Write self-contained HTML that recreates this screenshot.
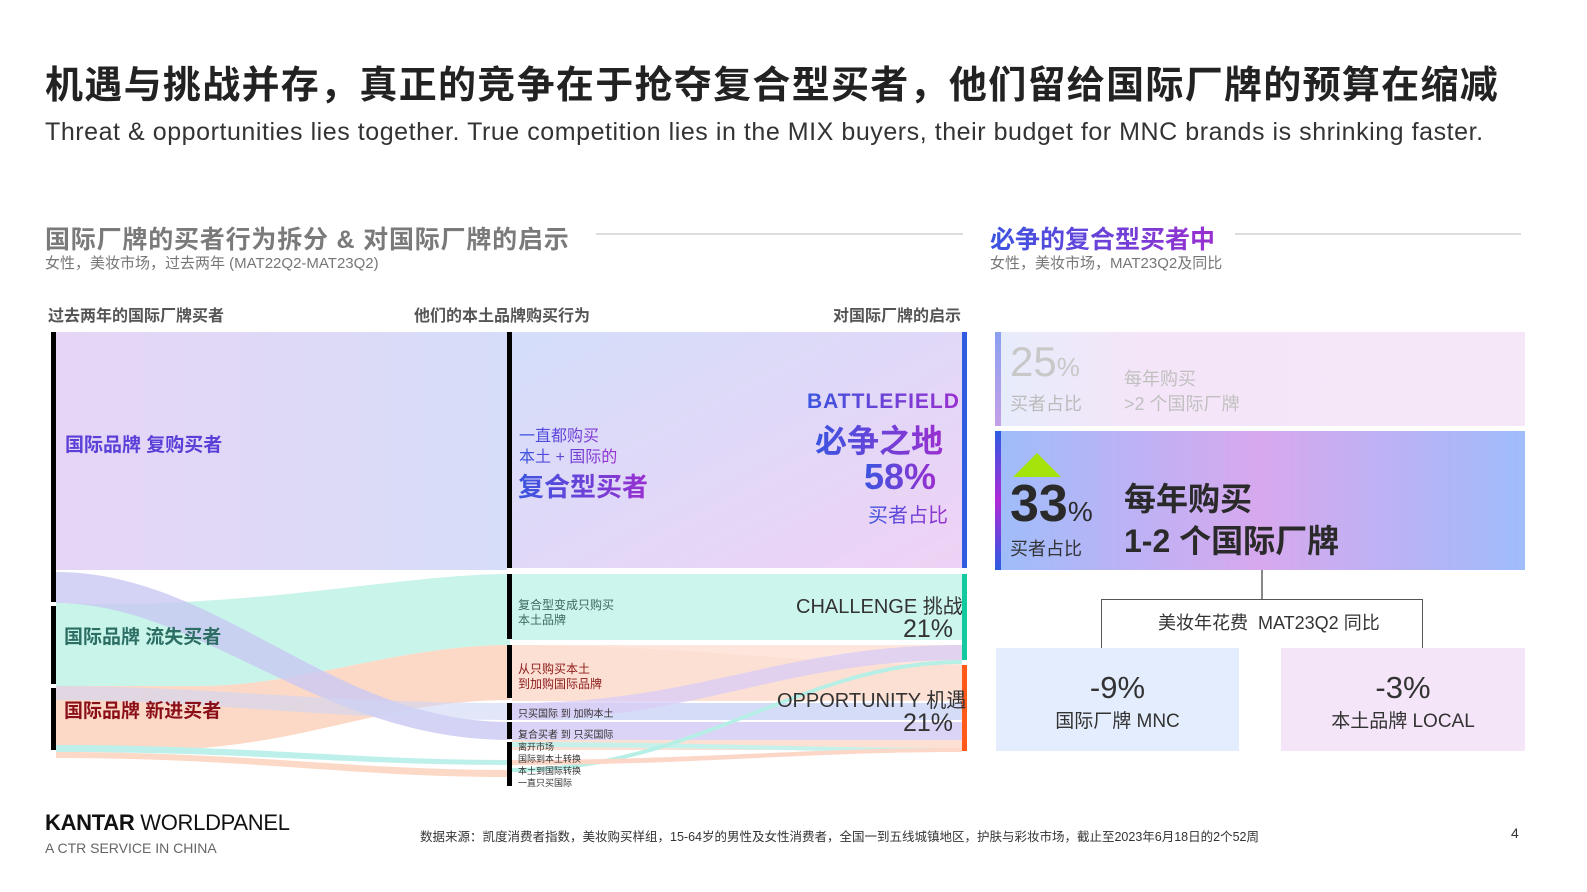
<!DOCTYPE html>
<html style="width:1587px;height:892px;overflow:hidden"><head><meta charset="utf-8"><style>
*{margin:0;padding:0;box-sizing:border-box}
html,body{width:1587px;height:892px;overflow:hidden}
body{background:#fff;position:relative;font-family:"Liberation Sans","Noto Sans CJK SC",sans-serif;color:#333}
.a{position:absolute;white-space:nowrap}
.g{background:linear-gradient(90deg,#3a55e0,#9a2fd0);-webkit-background-clip:text;background-clip:text;color:transparent}
</style></head><body>
<div class="a" style="left:45px;top:54px;font-size:38px;font-weight:700;color:#222;letter-spacing:1.3px">机遇与挑战并存，真正的竞争在于抢夺复合型买者，他们留给国际厂牌的预算在缩减</div>
<div class="a" style="left:45px;top:118px;font-size:25px;color:#333;letter-spacing:0.55px">Threat &amp; opportunities lies together. True competition lies in the MIX buyers, their budget for MNC brands is shrinking faster.</div>

<div class="a" style="left:45px;top:220px;font-size:25px;font-weight:700;color:#7a7a7a;letter-spacing:0.8px">国际厂牌的买者行为拆分 &amp; 对国际厂牌的启示</div>
<div class="a" style="left:596px;top:233px;width:367px;height:2px;background:#ddd"></div>
<div class="a" style="left:45px;top:252px;font-size:15px;color:#777">女性，美妆市场，过去两年 (MAT22Q2-MAT23Q2)</div>
<div class="a g" style="left:990px;top:220px;font-size:25px;font-weight:700">必争的复合型买者中</div>
<div class="a" style="left:1235px;top:233px;width:286px;height:2px;background:#ddd"></div>
<div class="a" style="left:990px;top:252px;font-size:15px;color:#777">女性，美妆市场，MAT23Q2及同比</div>

<div class="a" style="left:48px;top:302px;font-size:16px;font-weight:700;color:#555">过去两年的国际厂牌买者</div>
<div class="a" style="left:414px;top:302px;font-size:16px;font-weight:700;color:#555">他们的本土品牌购买行为</div>
<div class="a" style="left:833px;top:302px;font-size:16px;font-weight:700;color:#555">对国际厂牌的启示</div>

<svg class="a" style="left:0;top:0" width="1000" height="800">
<defs>
<linearGradient id="lp" x1="0" x2="1"><stop offset="0" stop-color="#e6d5f5"/><stop offset="1" stop-color="#d6ddf8"/></linearGradient>
<linearGradient id="mp" x1="0" x2="1" y1="0" y2="1"><stop offset="0" stop-color="#d3defa"/><stop offset="1" stop-color="#efd2f5"/></linearGradient>
</defs>
<rect x="56" y="332" width="451" height="238" fill="url(#lp)"/>
<rect x="512" y="332" width="450" height="236" fill="url(#mp)"/>
<path d="M56 603 L56 686 L200 686 C300 686 400 645 510 645 L510 640 L510 574 C400 574 250 610 56 603Z" fill="#c8f4ea"/>
<path d="M56 686 L56 750 L150 750 C300 750 380 700 510 700 L510 645 C400 645 300 686 200 686Z" fill="#fcd9c6"/>
<path d="M56 572 L56 603 C200 603 320 740 510 740 L510 722 C330 722 220 572 56 572Z" fill="#c9c8f3" opacity="0.8"/>
<path d="M56 686 C200 686 330 703 510 703 L510 720 C330 720 200 700 56 700Z" fill="#cfd6f5" opacity="0.6"/>
<path d="M56 745 C250 745 350 760 510 760 L510 765 C350 765 250 752 56 752Z" fill="#bdf0ea"/>
<path d="M56 752 C250 752 350 770 510 770 L510 777 C350 777 250 758 56 758Z" fill="#fcd9c6"/>
<rect x="512" y="574" width="450" height="66" fill="#ccf5ee"/>
<rect x="512" y="645" width="450" height="56" fill="#ffe6dd"/>
<path d="M512 645 L512 701 C700 701 800 700 962 700 L962 665 C800 665 700 645 512 645Z" fill="#fde0d4"/>
<rect x="512" y="703" width="450" height="17" fill="#d5dcf8"/>
<rect x="512" y="722" width="450" height="18" fill="#dcd4f7"/>
<path d="M512 703 C700 703 780 645 962 645 L962 660 C780 660 700 720 512 720Z" fill="#d9cdf5" opacity="0.8"/>
<path d="M512 740 L962 740 L962 750 L512 750Z" fill="#fde0d4"/>
<path d="M512 742 C700 742 800 748 962 748 L962 752 C800 752 700 747 512 747Z" fill="#c5f1ea"/>
<path d="M512 768 C700 768 800 660 962 660 L962 664 C800 664 700 772 512 772Z" fill="#b5efe6"/>
<path d="M512 765 C700 765 800 752 962 752 L962 748 C800 748 700 760 512 760Z" fill="#fcd6c6"/>
<rect x="51" y="332" width="5" height="270" fill="#000"/>
<rect x="51" y="606" width="5" height="78" fill="#000"/>
<rect x="51" y="688" width="5" height="62" fill="#000"/>
<rect x="507" y="332" width="5" height="236" fill="#000"/>
<rect x="507" y="574" width="5" height="65" fill="#000"/>
<rect x="507" y="645" width="5" height="53" fill="#000"/>
<rect x="507" y="703" width="5" height="17" fill="#000"/>
<rect x="507" y="722" width="5" height="17" fill="#000"/>
<rect x="507" y="742" width="5" height="44" fill="#000"/>
<rect x="962" y="332" width="5" height="236" fill="#2f5ce0"/>
<rect x="962" y="574" width="5" height="86" fill="#12c9a0"/>
<rect x="962" y="665" width="5" height="86" fill="#ff5a1a"/>
</svg>

<div class="a" style="left:65px;top:430px;font-size:19px;font-weight:700;color:#5a3fd8">国际品牌 复购买者</div>
<div class="a" style="left:64px;top:622px;font-size:19px;font-weight:700;color:#2c6e63">国际品牌 流失买者</div>
<div class="a" style="left:64px;top:696px;font-size:19px;font-weight:700;color:#8b0f1a">国际品牌 新进买者</div>

<div class="a g" style="left:519px;top:426px;font-size:16px;line-height:21px">一直都购买<br>本土 + 国际的</div>
<div class="a g" style="left:518px;top:467px;font-size:26px;font-weight:700">复合型买者</div>
<div class="a g" style="left:807px;top:390px;font-size:21px;font-weight:700;letter-spacing:1px">BATTLEFIELD</div>
<div class="a g" style="left:815px;top:416px;font-size:32px;font-weight:700">必争之地</div>
<div class="a g" style="left:864px;top:456px;font-size:36px;font-weight:700">58%</div>
<div class="a g" style="left:868px;top:499px;font-size:20px">买者占比</div>

<div class="a" style="left:518px;top:598px;font-size:12px;line-height:15px;color:#3b6a63">复合型变成只购买<br>本土品牌</div>
<div class="a" style="left:796px;top:590px;font-size:20px;color:#333">CHALLENGE 挑战</div>
<div class="a" style="left:903px;top:615px;font-size:25px;color:#333">21%</div>
<div class="a" style="left:518px;top:662px;font-size:12px;line-height:15px;color:#8b1a1a">从只购买本土<br>到加购国际品牌</div>
<div class="a" style="left:777px;top:684px;font-size:20px;color:#333">OPPORTUNITY 机遇</div>
<div class="a" style="left:903px;top:709px;font-size:25px;color:#333">21%</div>
<div class="a" style="left:518px;top:705px;font-size:10px;color:#333">只买国际 到 加购本土</div>
<div class="a" style="left:518px;top:726px;font-size:10px;color:#333">复合买者 到 只买国际</div>
<div class="a" style="left:518px;top:741px;font-size:9px;line-height:12px;color:#333">离开市场<br>国际到本土转换<br>本土到国际转换<br>一直只买国际</div>

<div class="a" style="left:995px;top:332px;width:530px;height:94px;background:linear-gradient(90deg,#e6ecfb,#f5e5f8 30%,#f5e6f8)"></div>
<div class="a" style="left:995px;top:332px;width:6px;height:94px;background:linear-gradient(#8aa0f0,#c5a0e8)"></div>
<div class="a" style="left:1010px;top:338px;font-size:42px;color:#c8c8c8;font-weight:300">25<span style="font-size:26px">%</span></div>
<div class="a" style="left:1010px;top:390px;font-size:18px;color:#bbb">买者占比</div>
<div class="a" style="left:1124px;top:367px;font-size:18px;line-height:25px;color:#c0c0c0">每年购买<br>&gt;2 个国际厂牌</div>

<div class="a" style="left:995px;top:431px;width:530px;height:139px;background:linear-gradient(90deg,#9fbdfb,#d7a8ee 50%,#9fbcfb)"></div>
<div class="a" style="left:995px;top:431px;width:6px;height:139px;background:linear-gradient(#2b5ce0,#b02ad8 50%,#2b5ce0)"></div>
<div class="a" style="left:1013px;top:453px;width:0;height:0;border-left:24px solid transparent;border-right:24px solid transparent;border-bottom:24px solid #a4e40a"></div>
<div class="a" style="left:1010px;top:474px;font-size:52px;font-weight:700;color:#2a2a2a">33<span style="font-size:28px;font-weight:400">%</span></div>
<div class="a" style="left:1010px;top:535px;font-size:18px;color:#333">买者占比</div>
<div class="a" style="left:1124px;top:478px;font-size:32px;line-height:42px;font-weight:700;color:#2a2a2a">每年购买<br>1-2 个国际厂牌</div>

<div class="a" style="left:1261px;top:570px;width:2px;height:30px;background:#888"></div>
<div class="a" style="left:1101px;top:599px;width:322px;height:50px;border:1.5px solid #555;border-bottom:none"></div>
<div class="a" style="left:1158px;top:609px;font-size:18px;color:#333">美妆年花费&nbsp; MAT23Q2 同比</div>
<div class="a" style="left:996px;top:648px;width:243px;height:103px;background:#e3edfd;text-align:center">
<div style="font-size:31px;margin-top:22px;color:#333">-9%</div><div style="font-size:19px;color:#333">国际厂牌 MNC</div></div>
<div class="a" style="left:1281px;top:648px;width:244px;height:103px;background:#f5e5f8;text-align:center">
<div style="font-size:31px;margin-top:22px;color:#333">-3%</div><div style="font-size:19px;color:#333">本土品牌 LOCAL</div></div>

<div class="a" style="left:45px;top:810px;font-size:22px;font-weight:700;color:#111;letter-spacing:-0.3px">KANTAR <span style="font-weight:400">WORLDPANEL</span></div>
<div class="a" style="left:45px;top:840px;font-size:14px;color:#666">A CTR SERVICE IN CHINA</div>
<div class="a" style="left:420px;top:826px;font-size:12.5px;color:#333">数据来源：凯度消费者指数，美妆购买样组，15-64岁的男性及女性消费者，全国一到五线城镇地区，护肤与彩妆市场，截止至2023年6月18日的2个52周</div>
<div class="a" style="left:1511px;top:825px;font-size:14px;color:#333">4</div>
</body></html>
